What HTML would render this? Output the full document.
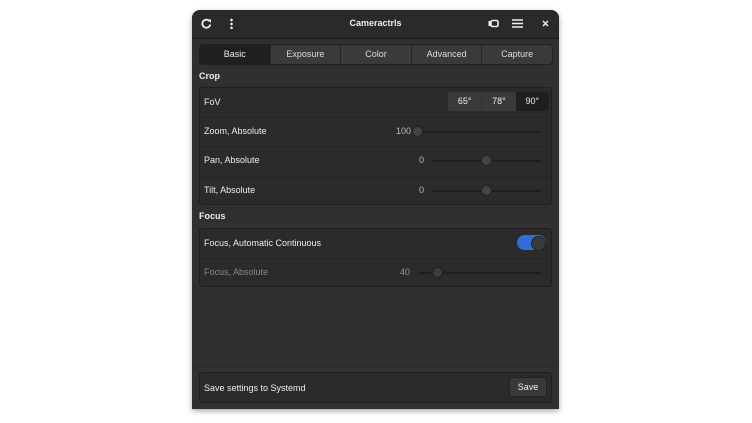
<!DOCTYPE html><html><head><style>
body{margin:0;width:752px;height:423px;background:#fff;position:relative;overflow:hidden;font-family:"Liberation Sans",sans-serif;}
.win{position:absolute;left:192px;top:10px;width:367px;height:399px;background:#303030;border-radius:8px 8px 0 0;box-shadow:0 2px 6px rgba(0,0,0,.35);overflow:hidden}
.hdr{position:absolute;left:0;top:0;width:367px;height:28px;background:#2a2a2a;border-bottom:1px solid #1c1c1c}
.t{position:absolute;color:#eee;font-size:9px;white-space:nowrap}
.box{position:absolute;left:7px;width:353px;background:#2b2b2b;border:1px solid #1f1f1f;border-radius:3px;box-sizing:border-box}
.sep{position:absolute;left:0;width:100%;height:1px;background:#252525}
.tr{position:absolute;height:2px;background:#1f1f1f;border-radius:1px}
.kn{position:absolute;width:11px;height:11px;border-radius:50% 50% 50% 50%;background:#444;border:1px solid #222;box-sizing:border-box}
</style></head><body>
<div class="win">
<div class="hdr">
<svg style="position:absolute;left:9px;top:8px" width="11" height="11" viewBox="0 0 11 11"><path d="M8.5 3.2A4 4 0 1 0 9.3 6.5" stroke="#eee" stroke-width="1.8" fill="none"/><path d="M6.5 1.5L10 1.5 10 5Z" fill="#eee"/></svg>
<div style="position:absolute;left:38px;top:8px;width:3px;height:11px;background:radial-gradient(circle,#eee 1.2px,transparent 1.4px) 0 0/3px 4px"></div>
<div class="t" style="left:0;width:367px;text-align:center;top:8px;font-weight:bold">Cameractrls</div>
<svg style="position:absolute;left:296px;top:9px" width="11" height="9"><rect x="3" y="1.5" width="7" height="6" rx="1.5" fill="none" stroke="#eee" stroke-width="1.6"/><rect x="0.5" y="2" width="2" height="5" fill="#eee"/></svg>
<svg style="position:absolute;left:320px;top:9px" width="11" height="9"><path d="M0 1H11M0 4.5H11M0 8H11" stroke="#eee" stroke-width="1.4"/></svg>
<svg style="position:absolute;left:350px;top:10px" width="7" height="7"><path d="M1 1L6 6M6 1L1 6" stroke="#eee" stroke-width="1.5"/></svg>
</div>
<div style="position:absolute;left:7px;top:34px;width:354px;height:21px;border:1px solid #1f1f1f;border-radius:4px;background:#3a3a3a;overflow:hidden;box-sizing:border-box;display:flex">
<div class="tb" style="flex:1;background:#1f1f1f;color:#eee;font-size:9px;text-align:center;line-height:19px">Basic</div>
<div style="flex:1;border-left:1px solid #252525;color:#ddd;font-size:9px;text-align:center;line-height:19px">Exposure</div>
<div style="flex:1;border-left:1px solid #252525;color:#ddd;font-size:9px;text-align:center;line-height:19px">Color</div>
<div style="flex:1;border-left:1px solid #252525;color:#ddd;font-size:9px;text-align:center;line-height:19px">Advanced</div>
<div style="flex:1;border-left:1px solid #252525;color:#ddd;font-size:9px;text-align:center;line-height:19px">Capture</div>
</div>
<div class="t" style="left:7px;top:61px;font-weight:bold">Crop</div>
<div class="box" style="top:77px;height:118px">
<div class="t" style="left:4px;top:9px">FoV</div>
<div style="position:absolute;left:248px;top:4px;width:101px;height:19px;background:#3a3a3a;border-radius:3px;display:flex;overflow:hidden;font-size:9px;color:#eee;line-height:19px;text-align:center">
<div style="flex:1">65°</div><div style="flex:1;border-left:1px solid #333">78°</div><div style="flex:1;background:#1e1e1e">90°</div></div>
<div class="sep" style="top:29px"></div>
<div class="t" style="left:4px;top:38px">Zoom, Absolute</div>
<div class="t" style="left:196px;top:38px;color:#bbb">100</div>
<div class="tr" style="left:218px;width:124px;top:43px"></div><div class="kn" style="left:212px;top:38px"></div>
<div class="sep" style="top:58px"></div>
<div class="t" style="left:4px;top:67px">Pan, Absolute</div>
<div class="t" style="left:219px;top:67px;color:#bbb">0</div>
<div class="tr" style="left:232px;width:110px;top:72px"></div><div class="kn" style="left:281px;top:67px"></div>
<div class="sep" style="top:88px"></div>
<div class="t" style="left:4px;top:97px">Tilt, Absolute</div>
<div class="t" style="left:219px;top:97px;color:#bbb">0</div>
<div class="tr" style="left:232px;width:110px;top:102px"></div><div class="kn" style="left:281px;top:97px"></div>
</div>
<div class="t" style="left:7px;top:201px;font-weight:bold">Focus</div>
<div class="box" style="top:218px;height:59px">
<div class="t" style="left:4px;top:9px">Focus, Automatic Continuous</div>
<div style="position:absolute;left:317px;top:6px;width:29px;height:15px;border-radius:8px;background:#2f6fd6"></div>
<div style="position:absolute;left:331px;top:7px;width:13px;height:13px;border-radius:50%;background:#3b3b3b;border:1px solid #222"></div>
<div class="sep" style="top:29px"></div>
<div class="t" style="left:4px;top:38px;color:#888">Focus, Absolute</div>
<div class="t" style="left:200px;top:38px;color:#999">40</div>
<div class="tr" style="left:218px;width:124px;top:43px"></div><div class="kn" style="left:232px;top:38px;background:#3c3c3c"></div>
</div>
<div class="sep" style="top:356px;background:#2a2a2a"></div>
<div class="box" style="top:362px;height:31px">
<div class="t" style="left:4px;top:10px">Save settings to Systemd</div>
<div style="position:absolute;left:309px;top:4px;width:38px;height:20px;background:#393939;border:1px solid #222;border-radius:3px;box-sizing:border-box;color:#eee;font-size:9px;text-align:center;line-height:18px">Save</div>
</div>
</div>
</body></html>
